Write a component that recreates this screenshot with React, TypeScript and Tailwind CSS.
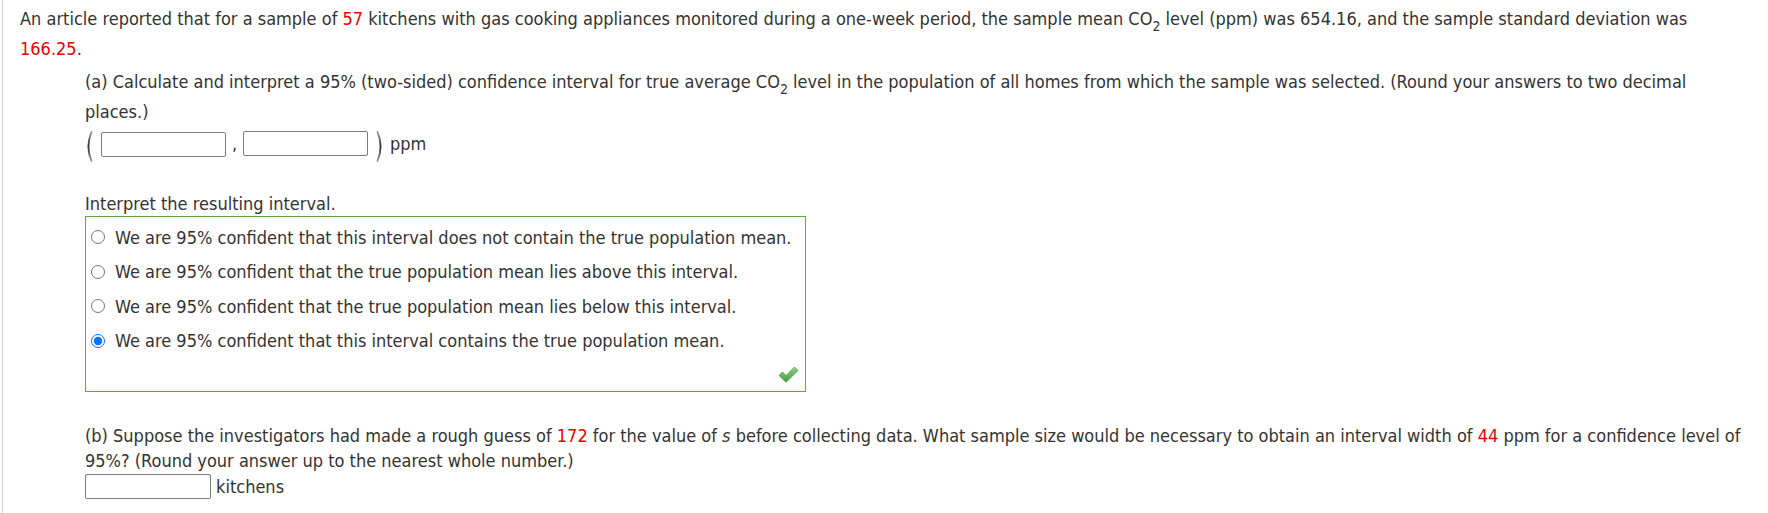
import React from "react";

const Red = ({ children }: { children: React.ReactNode }) => (
  <span className="text-[#ee0000]">{children}</span>
);

const Sub = ({ children }: { children: React.ReactNode }) => (
  <sub className="relative bottom-[-6px] text-[14px]">{children}</sub>
);

function Paren({ side }: { side: "l" | "r" }) {
  const id = side === "l" ? "pl" : "pr";
  return (
    <svg width="8" height="31" viewBox="0 0 8 31" className="shrink-0">
      <defs>
        <linearGradient id={id} x1="0" y1="0" x2="0" y2="1">
          <stop offset="0" stopColor="#9a9a9a" />
          <stop offset="0.5" stopColor="#333" />
          <stop offset="1" stopColor="#9a9a9a" />
        </linearGradient>
      </defs>
      <path
        d={side === "l" ? "M6.5 1 Q0.3 15.5 6.5 30" : "M1.5 1 Q7.7 15.5 1.5 30"}
        fill="none"
        stroke={`url(#${id})`}
        strokeWidth="1.9"
        strokeLinecap="round"
      />
    </svg>
  );
}

function Check() {
  return (
    <svg width="21" height="17" viewBox="0 0 21 17">
      <defs>
        <linearGradient id="ck" x1="0" y1="0" x2="0" y2="1">
          <stop offset="0" stopColor="#8fd47f" />
          <stop offset="1" stopColor="#3f9c40" />
        </linearGradient>
      </defs>
      <path
        d="M1 9.5 L4.5 6 L8 9.5 L16.5 1 L20 4.5 L8 16.3 Z"
        fill="url(#ck)"
        stroke="#4b9e48"
        strokeWidth="0.8"
        strokeLinejoin="round"
      />
    </svg>
  );
}

const Box = ({ w }: { w: string }) => (
  <input
    type="text"
    readOnly
    className={`${w} h-[25px] shrink-0 rounded-[2px] border border-[#7a7a7a] bg-white`}
  />
);

const options = [
  "We are 95% confident that this interval does not contain the true population mean.",
  "We are 95% confident that the true population mean lies above this interval.",
  "We are 95% confident that the true population mean lies below this interval.",
  "We are 95% confident that this interval contains the true population mean.",
];

export default function App() {
  return (
    <div className="min-h-[513px] bg-white pl-[2px] font-['DejaVu_Sans_Condensed','DejaVu_Sans',sans-serif] font-stretch-condensed text-[18px] text-[#333]">
      <div className="min-h-[513px] border-l border-[#d3d3d3] pl-[17px] pr-[22px] pt-[4px]">
        <p className="leading-[30px]">
          An article reported that for a sample of <Red>57</Red> kitchens with gas cooking appliances
          monitored during a one-week period, the sample mean CO<Sub>2</Sub> level (ppm) was 654.16,
          and the sample standard deviation was <Red>166.25</Red>.
        </p>
        <div className="ml-[65px] mt-[3px]">
          <p className="leading-[30px]">
            (a) Calculate and interpret a 95% (two-sided) confidence interval for true average CO
            <Sub>2</Sub> level in the population of all homes from which the sample was selected.
            (Round your answers to two decimal places.)
          </p>
          <div className="flex h-[35px] items-start pt-[4px]">
            <Paren side="l" />
            <div className="ml-[8px]">
              <Box w="w-[125px]" />
            </div>
            <span className="w-[17px] text-center leading-[25px]">,</span>
            <Box w="w-[125px]" />
            <div className="ml-[8px]">
              <Paren side="r" />
            </div>
            <span className="ml-[6px] leading-[25px]">ppm</span>
          </div>
          <p className="mt-[28.5px] leading-[25px]">Interpret the resulting interval.</p>
          <div className="w-[721px] border border-[#62a83b] pt-[3.5px]">
            {options.map((o, i) => (
              <label key={i} className="flex h-[34.5px] items-center">
                <input
                  type="radio"
                  name="interp"
                  defaultChecked={i === 3}
                  className="m-0 ml-[4.5px] h-[14px] w-[14px] shrink-0"
                />
                <span className="ml-[10.5px] leading-[25px]">{o}</span>
              </label>
            ))}
            <div className="flex justify-end pb-[8px] pr-[6px] pt-[7.5px]">
              <Check />
            </div>
          </div>
          <p className="mt-[31px] leading-[25px]">
            (b) Suppose the investigators had made a rough guess of <Red>172</Red> for the value of{" "}
            <i>s</i> before collecting data. What sample size would be necessary to obtain an interval
            width of <Red>44</Red> ppm for a confidence level of 95%? (Round your answer up to the
            nearest whole number.)
          </p>
          <div className="mt-[1.5px] flex items-center">
            <Box w="w-[126px]" />
            <span className="ml-[5px] leading-[25px]">kitchens</span>
          </div>
        </div>
      </div>
    </div>
  );
}
